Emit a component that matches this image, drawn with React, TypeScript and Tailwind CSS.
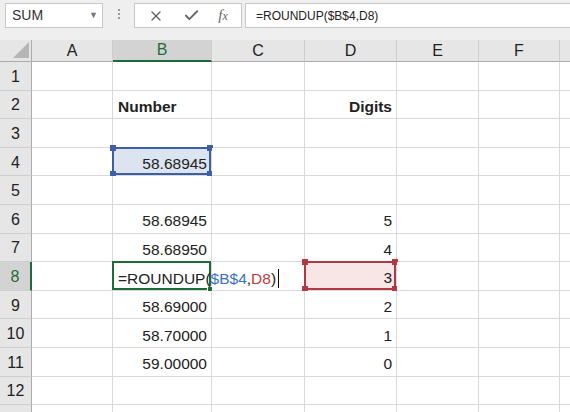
import { X, Check } from "lucide-react";
import type { ReactNode } from "react";

const columns = [
  { letter: "A", w: "w-[81px]" },
  { letter: "B", w: "w-[99px]" },
  { letter: "C", w: "w-[93px]" },
  { letter: "D", w: "w-[92px]" },
  { letter: "E", w: "w-[82px]" },
  { letter: "F", w: "w-[81px]" },
  { letter: "G", w: "w-[60px]" },
];

type Mark = "blue" | "green" | "red" | undefined;

const cells: Record<number, Record<string, { v: ReactNode; align?: "left" | "right"; bold?: boolean; mark?: Mark }>> = {
  2: {
    B: { v: "Number", align: "left", bold: true },
    D: { v: "Digits", bold: true },
  },
  4: { B: { v: "58.68945", mark: "blue" } },
  6: { B: { v: "58.68945" }, D: { v: "5" } },
  7: { B: { v: "58.68950" }, D: { v: "4" } },
  8: {
    B: {
      v: (
        <span className="whitespace-nowrap">
          =ROUNDUP(<span className="text-[#3a6fc4]">$B$4</span>,<span className="text-[#c0393f]">D8</span>)
          <span className="ml-[2px] inline-block h-[19px] w-[1px] translate-y-[4px] bg-black" />
        </span>
      ),
      align: "left",
      mark: "green",
    },
    D: { v: "3", mark: "red" },
  },
  9: { B: { v: "58.69000" }, D: { v: "2" } },
  10: { B: { v: "58.70000" }, D: { v: "1" } },
  11: { B: { v: "59.00000" }, D: { v: "0" } },
};

const Handle = ({ pos, color }: { pos: string; color: string }) => (
  <span className={`absolute h-[6px] w-[6px] ${pos} ${color}`} />
);

const Overlay = ({ mark }: { mark: Mark }) => {
  if (mark === "blue") {
    return (
      <div className="pointer-events-none absolute -left-[1px] -top-[1px] bottom-0 right-0 border-2 border-[#3c5fa6] bg-[#dce4f0]">
        <Handle pos="-left-[4px] -top-[4px]" color="bg-[#3c5fa6]" />
        <Handle pos="-right-[4px] -top-[4px]" color="bg-[#3c5fa6]" />
        <Handle pos="-left-[4px] -bottom-[4px]" color="bg-[#3c5fa6]" />
        <Handle pos="-right-[4px] -bottom-[4px]" color="bg-[#3c5fa6]" />
      </div>
    );
  }
  if (mark === "red") {
    return (
      <div className="pointer-events-none absolute -left-[1px] -top-[1px] bottom-0 right-0 border-2 border-[#b03a44] bg-[#f8e6e6]">
        <Handle pos="-left-[4px] -top-[4px]" color="bg-[#b03a44]" />
        <Handle pos="-right-[4px] -top-[4px]" color="bg-[#b03a44]" />
        <Handle pos="-left-[4px] -bottom-[4px]" color="bg-[#b03a44]" />
        <Handle pos="-right-[4px] -bottom-[4px]" color="bg-[#b03a44]" />
      </div>
    );
  }
  if (mark === "green") {
    return (
      <div className="pointer-events-none absolute -left-[1px] -top-[1px] bottom-0 right-0 border-2 border-[#1e6b3a]">
        <span className="absolute -bottom-[4px] -right-[4px] h-[6px] w-[6px] border border-white bg-[#1e6b3a]" />
      </div>
    );
  }
  return null;
};

const Toolbar = () => (
  <div className="flex h-[40px] items-start bg-[#efefef] pt-[3px] text-[#333]">
    <div className="ml-[5px] flex h-[25px] w-[98px] items-center justify-between border border-[#c8c8c8] bg-white pl-[6px] pr-[4px] text-[14px]">
      <span>SUM</span>
      <span className="text-[9px] text-[#777]">▼</span>
    </div>
    <div className="flex w-[31px] flex-col items-center gap-[2px] pt-[6px]">
      <span className="h-[2px] w-[2px] bg-[#9a9a9a]" />
      <span className="h-[2px] w-[2px] bg-[#9a9a9a]" />
      <span className="h-[2px] w-[2px] bg-[#9a9a9a]" />
    </div>
    <div className="flex h-[25px] w-[108px] items-center justify-around border border-[#c8c8c8] bg-white px-[4px] text-[#666]">
      <X size={16} strokeWidth={2} />
      <Check size={17} strokeWidth={2.6} />
      <span className="font-['Liberation_Serif'] text-[15px] italic">
        f<span className="text-[12px]">x</span>
      </span>
    </div>
    <div className="ml-[3px] flex h-[25px] flex-1 items-center border border-r-0 border-[#c8c8c8] bg-white pl-[10px] text-[12px] text-[#222]">
      =ROUNDUP($B$4,D8)
    </div>
  </div>
);

const HeaderRow = () => (
  <div className="flex h-[22px]">
    <div className="relative w-[32px] shrink-0 border-b border-r border-[#ababab] bg-[#e6e6e6]">
      <svg className="absolute bottom-[3px] right-[2px]" width="16" height="16" viewBox="0 0 16 16">
        <polygon points="16,0 16,16 0,16" fill="#b6b6b6" />
      </svg>
    </div>
    {columns.map((c) => {
      const sel = c.letter === "B";
      return (
        <div
          key={c.letter}
          className={`${c.w} flex shrink-0 items-center justify-center border-r border-[#cdcdcd] text-[16px] ${
            sel
              ? "border-b-2 border-b-[#1e6b3a] bg-[#d3d3d3] text-[#1e6b3a]"
              : "border-b border-b-[#ababab] bg-[#e6e6e6] text-[#222]"
          }`}
        >
          {c.letter}
        </div>
      );
    })}
  </div>
);

const GridRow = ({ n }: { n: number }) => {
  const rowSel = n === 8;
  const data = cells[n] ?? {};
  return (
    <div className="flex h-[28.6px]">
      <div
        className={`flex w-[32px] shrink-0 items-center justify-center border-b border-[#cdcdcd] pt-[2px] text-[16px] ${
          rowSel
            ? "border-r-2 border-r-[#1e6b3a] bg-[#d3d3d3] text-[#1e6b3a]"
            : "border-r border-r-[#ababab] bg-[#e6e6e6] text-[#222]"
        }`}
      >
        {n}
      </div>
      {columns.map((c) => {
        const cell = data[c.letter];
        return (
          <div
            key={c.letter}
            className={`${c.w} relative flex shrink-0 items-center border-b border-r border-[#d9d9d9] bg-white ${
              cell?.mark === "green" ? "z-10" : ""
            }`}
          >
            {cell && <Overlay mark={cell.mark} />}
            {cell && (
              <span
                className={`relative flex w-full pt-[4px] text-[15.5px] text-[#222] ${
                  cell.align === "left" ? "justify-start pl-[5px]" : "justify-end pr-[4px]"
                } ${cell.bold ? "font-bold" : ""}`}
              >
                {cell.v}
              </span>
            )}
          </div>
        );
      })}
    </div>
  );
};

export default function App() {
  return (
    <div className="h-[412px] w-[570px] overflow-hidden bg-white font-['Liberation_Sans',Arial,sans-serif]">
      <Toolbar />
      <HeaderRow />
      {Array.from({ length: 13 }, (_, i) => (
        <GridRow key={i} n={i + 1} />
      ))}
    </div>
  );
}
